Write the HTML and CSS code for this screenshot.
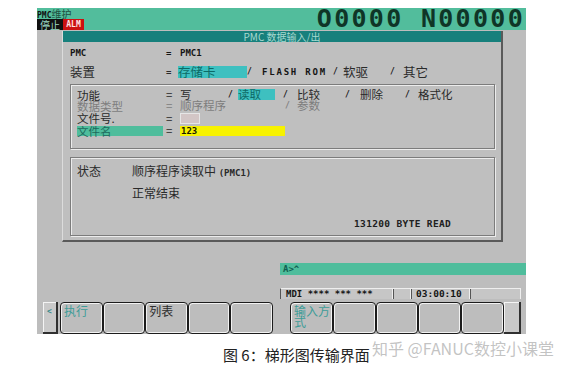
FILE: index.html
```html
<!DOCTYPE html>
<html lang="zh-CN">
<head>
<meta charset="utf-8">
<link rel="stylesheet" href="styles.css">
</head>
<body>
<div class="page">
  <div class="screen">
    <div class="header">
      <div class="hleft">
        <div class="hl1"><span class="lat">PMC</span>维护</div>
        <div class="hl2"><span class="stop">停止</span><span class="alm lat">ALM</span></div>
      </div>
      <div class="counter">O0000 N00000</div>
    </div>

    <div class="dialog">
      <div class="dtitle">PMC 数据输入/出</div>
      <div class="dbody">
        <div class="row r-pmc">
          <span class="lbl lat">PMC</span><span class="eq">=</span><span class="lat v-pmc">PMC1</span>
        </div>
        <div class="row r-dev">
          <span class="lbl">装置</span><span class="eq">=</span>
          <span class="opts">
            <span class="hl-cyan w69">存储卡</span><span class="sl w15">/</span><span class="lat w71 wide">FLASH ROM</span><span class="sl w10">/</span><span class="w47">软驱</span><span class="sl w13">/</span><span>其它</span>
          </span>
        </div>

        <div class="box box1">
          <div class="brow br1">
            <span class="blbl">功能</span><span class="beq">=</span>
            <span class="opts">
              <span class="w48">写</span><span class="sl w10">/</span><span class="hl-cyan w37">读取</span><span class="w8"></span><span class="sl w14">/</span><span class="w48">比较</span><span class="sl w15">/</span><span class="w45">删除</span><span class="sl w13">/</span><span>格式化</span>
            </span>
          </div>
          <div class="brow br2 dis">
            <span class="blbl">数据类型</span><span class="beq">=</span>
            <span class="opts">
              <span class="w105">顺序程序</span><span class="sl w12">/</span><span>参数</span>
            </span>
          </div>
          <div class="brow br3">
            <span class="blbl">文件号.</span><span class="beq">=</span>
            <span class="opts"><span class="numbox"></span></span>
          </div>
          <div class="brow br4">
            <span class="blbl hl-teal">文件名</span><span class="beq">=</span>
            <span class="opts"><span class="ybox lat">123</span></span>
          </div>
        </div>

        <div class="box box2">
          <div class="srow s1"><span class="slbl">状态</span><span>顺序程序读取中 <span class="lat">(PMC1)</span></span></div>
          <div class="srow s2"><span class="slbl"></span><span>正常结束</span></div>
          <div class="srow s3"><span class="lat">131200 BYTE READ</span></div>
        </div>
      </div>
    </div>

    <div class="inbar lat">A&gt;^</div>

    <div class="status">
      <span class="seg seg1 lat">MDI **** *** ***</span>
      <span class="seg seg2"></span>
      <span class="seg seg3 lat">03:00:10</span>
      <span class="seg seg4"></span>
    </div>

    <div class="keys">
      <div class="kside kl">&lt;</div>
      <div class="group g1">
        <div class="key teal">执行</div>
        <div class="key"></div>
        <div class="key">列表</div>
        <div class="key"></div>
        <div class="key"></div>
      </div>
      <div class="group g2">
        <div class="key teal">输入方式</div>
        <div class="key"></div>
        <div class="key"></div>
        <div class="key"></div>
        <div class="key"></div>
      </div>
      <div class="kside kr"></div>
    </div>
  </div>

  <div class="caption">图 6：梯形图传输界面</div>
  <div class="watermark">知乎 @FANUC数控小课堂</div>
</div>
</body>
</html>
```

FILE: styles.css
```css
* { box-sizing: border-box; }
html, body { margin: 0; padding: 0; background: #ffffff; }
body {
  font-family: "Noto Sans CJK SC", "DejaVu Sans", sans-serif;
  font-size: 12px;
  color: #2a2a2a;
}
.page { position: relative; width: 566px; height: 373px; overflow: hidden; }

.lat {
  font-family: "DejaVu Sans Mono", "Liberation Mono", monospace;
  font-weight: bold;
  font-size: 9px;
}

/* ---------- screen ---------- */
.screen {
  margin: 8px 0 0 37px;
  width: 489px;
  height: 326px;
  background: #bdbdbd;
  display: flex;
  flex-direction: column;
}

.header {
  height: 22px;
  background: #52bd9c;
  display: flex;
  justify-content: space-between;
  align-items: stretch;
}
.hleft { display: flex; flex-direction: column; }
.hl1 {
  height: 11px;
  line-height: 11px;
  font-size: 10px;
  color: #1c4f40;
  white-space: nowrap;
}
.hl1 .lat { color: #101010; font-size: 8px; }
.hl2 { display: flex; height: 11px; }
.stop {
  width: 26px;
  background: #111;
  color: #9fdcc8;
  font-size: 10px;
  line-height: 11px;
  text-align: center;
}
.alm {
  width: 21px;
  background: #cc1010;
  color: #ffe0e0;
  font-size: 8px;
  line-height: 11px;
  text-align: center;
}
.counter {
  font-family: "DejaVu Sans Mono", "Liberation Mono", monospace;
  font-weight: bold;
  font-size: 25px;
  letter-spacing: 2.3px;
  line-height: 22px;
  color: #0f3527;
  padding-right: 1px;
}

/* ---------- dialog ---------- */
.dialog {
  margin: 1px 0 0 25px;
  width: 441px;
  height: 212px;
  background: #bfbfbf;
  border-left: 1px solid #dcdcdc;
  border-right: 2px solid #5a5a5a;
  border-bottom: 2px solid #5a5a5a;
}
.dtitle {
  height: 11px;
  background: #17807c;
  color: #a6d9d0;
  font-size: 10px;
  line-height: 11px;
  text-align: center;
}
.dbody { padding: 5px 0 0 7px; }

.row {
  display: grid;
  grid-template-columns: 96px 12px 1fr;
  height: 12px;
  line-height: 12px;
  align-items: center;
}
.r-pmc { color: #151515; }
.r-pmc .lbl { font-size: 9px; }
.v-pmc { padding-left: 2px; }
.r-dev { margin-top: 7px; font-size: 12.5px; }
.eq { font-family: "DejaVu Sans Mono", monospace; font-weight: bold; font-size: 9px; }

.opts { display: flex; align-items: center; white-space: nowrap; }
.opts > span { display: inline-block; flex: none; }
.sl {
  font-family: "DejaVu Sans Mono", monospace;
  font-weight: bold;
  font-size: 8px;
  color: #111;
}
.wide { letter-spacing: 1.8px; color: #151515; }

.w8 { width: 8px; } .w10 { width: 10px; } .w12 { width: 12px; } .w13 { width: 13px; }
.w14 { width: 14px; } .w15 { width: 15px; } .w37 { width: 37px; } .w45 { width: 45px; }
.w47 { width: 47px; } .w48 { width: 48px; } .w69 { width: 69px; } .w71 { width: 71px; }
.w105 { width: 105px; }

.hl-cyan {
  background: #3ec0c0;
  color: #0d6a66;
  height: 12px;
  line-height: 12px;
}
.hl-teal {
  background: #4fbd9c;
  color: #1e6a5c;
}

/* boxes */
.box {
  width: 425px;
  border: 1px solid #7c7c7c;
  box-shadow: inset 1px 1px 0 #ececec, 1px 1px 0 #ececec;
}
.box1 { margin-top: 6px; height: 65px; padding: 4px 0 0 6px; font-size: 11.5px; }
.brow {
  display: grid;
  grid-template-columns: 89px 14px 1fr;
  line-height: 11px;
  height: 11px;
  align-items: center;
}
.blbl { height: 10px; line-height: 10px; }
.br1 .hl-cyan { height: 11px; line-height: 11px; }
.br3 { height: 14px; }
.br4 { height: 11px; }
.br4 .blbl { width: 86px; height: 10px; }
.dis { color: #7d7d7d; }
.dis .sl { color: #7d7d7d; }
.numbox {
  width: 20px;
  height: 11px;
  background: #d3c6c6;
  border: 1px solid #e6e6e6;
}
.ybox {
  width: 105px;
  height: 10px;
  line-height: 10px;
  background: #f7f200;
  color: #1a1a00;
  padding-left: 1px;
}

.box2 { margin-top: 8px; height: 79px; padding: 7px 0 0 6px; }
.srow { display: flex; height: 12px; line-height: 12px; white-space: nowrap; }
.slbl { width: 55px; flex: none; }
.s2 { margin-top: 10px; }
.s3 { margin-top: 19px; padding-left: 277px; }
.s3 .lat { color: #202020; font-size: 9.5px; letter-spacing: 0.35px; }

/* input line + status */
.inbar {
  margin: 21px 0 0 243px;
  height: 12px;
  line-height: 12px;
  background: #4fbd9c;
  color: #125f50;
  padding-left: 3px;
}
.status {
  margin: 13px 0 0 243px;
  width: 241px;
  height: 11px;
  display: flex;
  background: #c6c6c6;
  border-top: 1px solid #eeeeee;
  border-left: 1px solid #555;
}
.seg {
  height: 10px;
  line-height: 10px;
  border-right: 1px solid #555;
  box-shadow: inset -1px 0 0 #eeeeee;
  color: #151515;
  white-space: nowrap;
  padding-left: 5px;
}
.seg1 { width: 113px; }
.seg2 { width: 18px; }
.seg3 { width: 59px; padding-left: 4px; font-size: 9.5px; }
.seg4 { flex: 1; border-right: 0; }

/* soft keys */
.keys {
  margin: 3px 0 0 6px;
  height: 32px;
  display: flex;
}
.kside {
  height: 32px;
  background: #c9c9c9;
  border-right: 2px solid #303030;
  border-bottom: 2px solid #303030;
  box-shadow: inset 1px 1px 0 #f4f4f4;
  font-family: "DejaVu Sans Mono", monospace;
  font-size: 8px;
  font-weight: bold;
  color: #3a8a8a;
  padding: 5px 0 0 4px;
}
.kl { width: 15px; margin-right: 2px; }
.kr { width: 17px; }
.group { display: flex; }
.g1 { width: 213px; }
.g2 { width: 214px; margin-left: 17px; }
.key {
  flex: 1;
  height: 32px;
  border: 1px solid #1c1c1c;
  border-radius: 4px;
  box-shadow: inset 1px 1px 0 #f2f2f2, inset -1px -1px 0 #f2f2f2;
  background: #bdbdbd;
  padding: 2px 0 0 3px;
  font-size: 12px;
  line-height: 11px;
  color: #2e2e2e;
}
.key.teal { color: #3d9c98; }

/* caption + watermark */
.caption {
  margin: 12px 0 0 223px;
  font-size: 15px;
  line-height: 18px;
  color: #222;
  white-space: nowrap;
}
.watermark {
  position: absolute;
  left: 372px;
  top: 339px;
  font-size: 16px;
  line-height: 18px;
  color: rgba(175, 175, 175, 0.75);
  white-space: nowrap;
}
```
